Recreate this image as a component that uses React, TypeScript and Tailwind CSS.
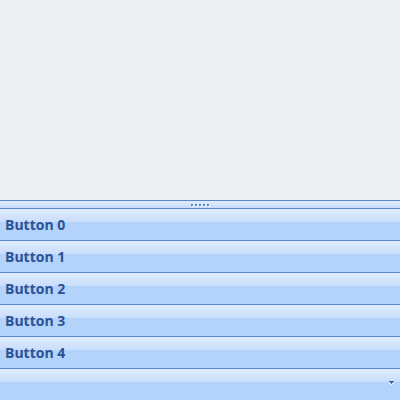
import React from "react";

function Row({ label }: { label: string }) {
  return (
    <div className="relative h-[32px] border-b border-[#5b87c9] bg-[#b3d3fb]">
      <div className="absolute inset-x-0 top-0 h-[13px] bg-gradient-to-b from-[#e0ecfd] to-[#c8defb]" />
      <div className="relative flex h-full items-center pl-[5px] pb-[1px] text-[14px] font-bold text-[#2b5295]" style={{ fontFamily: '"Open Sans", sans-serif' }}>
        {label}
      </div>
    </div>
  );
}

export default function App() {
  return (
    <div className="flex h-[400px] w-[400px] flex-col overflow-hidden bg-[#eeeff1]">
      <div className="h-[200px]" />
      <div className="flex h-[9px] items-center justify-center gap-[2px] border-y border-[#5b87c9] bg-gradient-to-b from-[#e2edfd] to-[#c7ddfb]">
        {[0, 1, 2, 3, 4].map((i) => (
          <div key={i} className="h-[2px] w-[2px] bg-[#5b87c9] shadow-[1px_1px_0_#ffffff]" />
        ))}
      </div>
      {["Button 0", "Button 1", "Button 2", "Button 3", "Button 4"].map((l) => (
        <Row key={l} label={l} />
      ))}
      <div className="relative flex-1 bg-[#b3d3fb]">
        <div className="absolute inset-x-0 top-0 h-[13px] bg-gradient-to-b from-[#e0ecfd] to-[#c8defb]" />
        <svg className="absolute left-[389px] top-[12px]" width="6" height="4" viewBox="0 0 6 4" shapeRendering="crispEdges">
          <rect x="0" y="0" width="5" height="1" fill="#3a64a8" />
          <rect x="1" y="1" width="3" height="1" fill="#3a64a8" />
          <rect x="0" y="1" width="1" height="1" fill="#ffffff" />
          <rect x="4" y="1" width="1" height="1" fill="#ffffff" />
          <rect x="2" y="2" width="1" height="1" fill="#3a64a8" />
          <rect x="1" y="2" width="1" height="1" fill="#ffffff" />
          <rect x="3" y="2" width="1" height="1" fill="#ffffff" />
          <rect x="2" y="3" width="1" height="1" fill="#ffffff" />
        </svg>
      </div>
    </div>
  );
}
